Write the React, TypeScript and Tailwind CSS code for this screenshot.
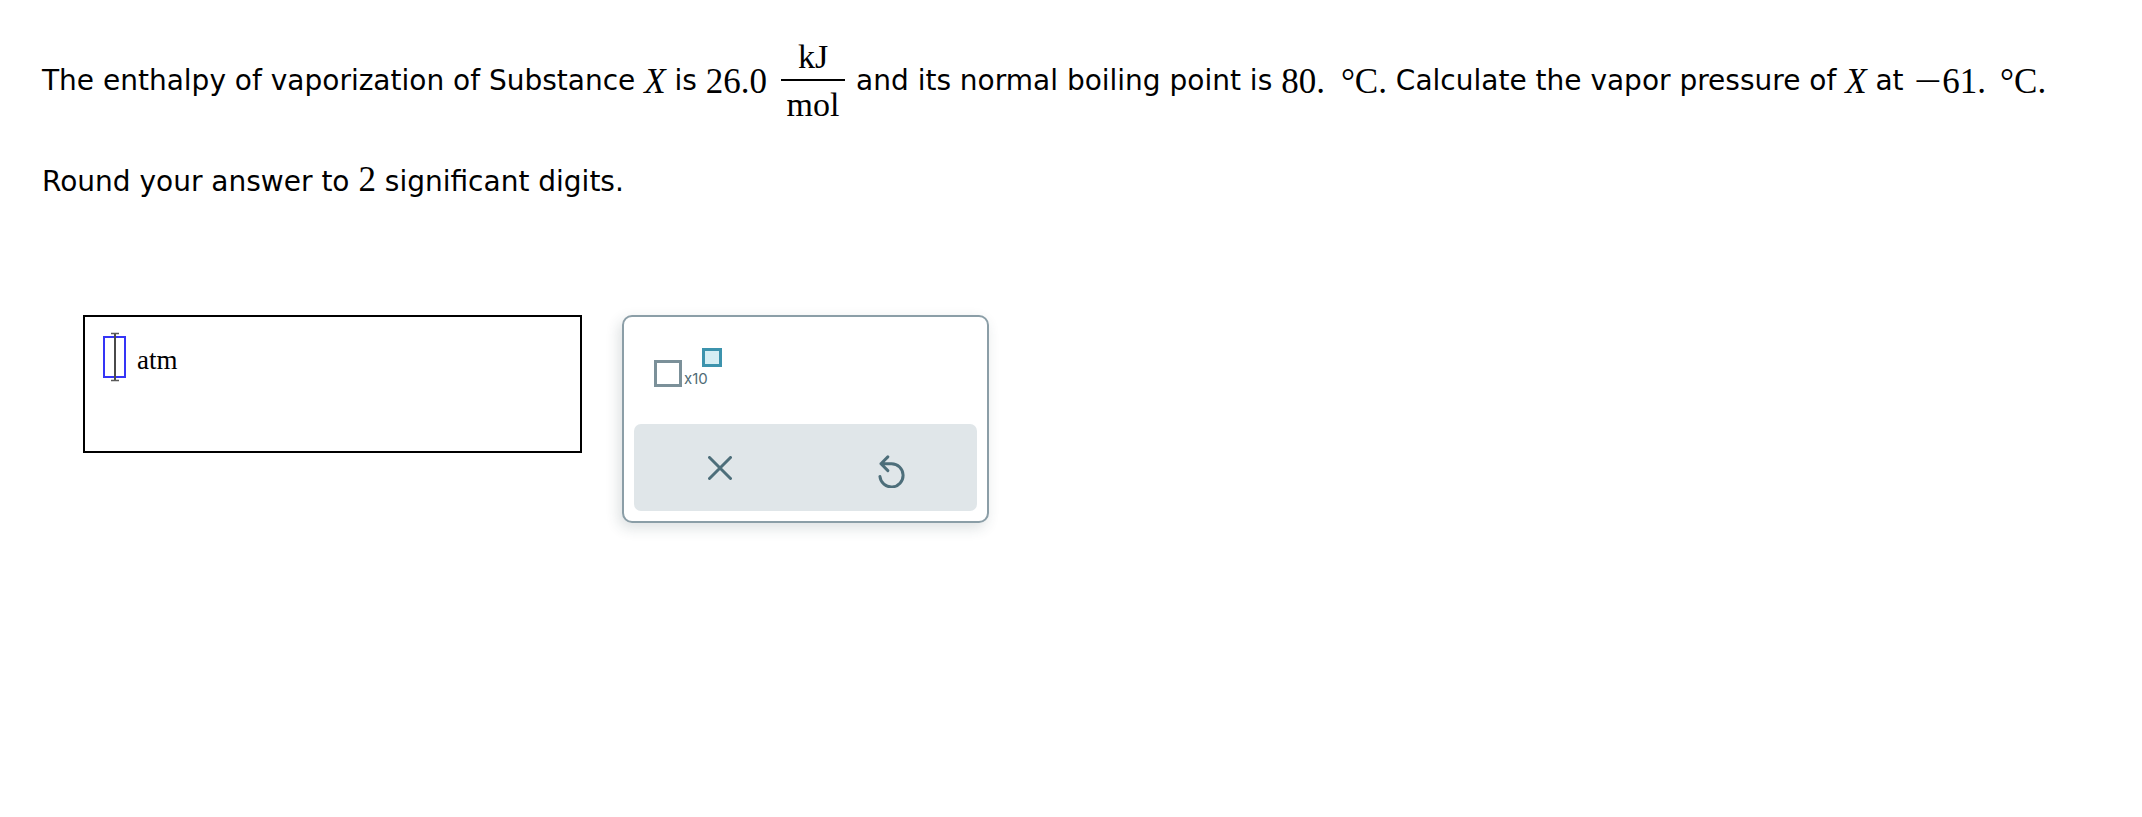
const SANS = { fontFamily: '"DejaVu Sans", Verdana, sans-serif' };
const SERIF = { fontFamily: '"Liberation Serif", "Times New Roman", serif' };

function MathText({ children, italic = false }: { children: React.ReactNode; italic?: boolean }) {
  return (
    <span className={`text-[35px] leading-none ${italic ? 'italic' : ''}`} style={SERIF}>
      {children}
    </span>
  );
}

function Fraction({ top, bottom }: { top: string; bottom: string }) {
  return (
    <span className="inline-flex flex-col items-center text-[34px] ml-[14px] mr-[11px]" style={SERIF}>
      <span className="leading-[30px] pb-[7px]">{top}</span>
      <span className="h-[2px] w-[64px] bg-black" />
      <span className="leading-[30px] pt-[9px]">{bottom}</span>
    </span>
  );
}

function CursorSlot() {
  return (
    <span className="relative inline-block w-[23px] h-[42px] border-2 border-[#3535f6]">
      <svg className="absolute left-[1.5px] top-[-6px]" width="16" height="50" viewBox="0 0 16 50">
        <path d="M8 2v46" stroke="#4a4a4a" strokeWidth="2" fill="none" />
        <path d="M4 1.5h8M4 48.5h8" stroke="#5a5a5a" strokeWidth="1.5" fill="none" />
      </svg>
    </span>
  );
}

function TimesIcon() {
  return (
    <svg width="24" height="24" viewBox="0 0 24 24" fill="none">
      <path d="M1.5 1.5l21 21M22.5 1.5l-21 21" stroke="#4d6e7a" strokeWidth="3" strokeLinecap="round" />
    </svg>
  );
}

function UndoIcon() {
  return (
    <svg width="30" height="38" viewBox="0 0 28 36" fill="none" className="mt-[2px]">
      <path
        d="M11 6.5 4.5 13l6.5 6.5M4.5 13H14.5a11 11 0 1 1-11 12"
        stroke="#4d6e7a"
        strokeWidth="2.8"
        strokeLinecap="round"
        strokeLinejoin="round"
      />
    </svg>
  );
}

function ScientificNotationIcon() {
  return (
    <div className="relative w-[70px] h-[42px]">
      <span className="absolute left-0 top-[12px] w-[28px] h-[27px] border-[3px] border-[#7b9099] bg-white" />
      <span
        className="absolute left-[30px] top-[23px] text-[15px] leading-none text-[#4f6b76]"
        style={{ fontFamily: 'Inter, "Open Sans", sans-serif' }}
      >
        x10
      </span>
      <span className="absolute left-[48px] top-0 w-[20px] h-[19px] border-[3px] border-[#3c93ad] bg-[#d5eef4]" />
    </div>
  );
}

export default function App() {
  return (
    <div className="w-[2142px] h-[817px] bg-white text-black" style={SANS}>
      <div className="flex items-center whitespace-pre pl-[42px] pt-[42px] text-[28px] leading-none">
        <span>The enthalpy of vaporization of Substance </span>
        <MathText italic>X</MathText>
        <span> is </span>
        <MathText>26.0</MathText>
        <Fraction top="kJ" bottom="mol" />
        <span>and its normal boiling point is </span>
        <MathText>80.</MathText>
        <MathText>
          <span className="ml-[16px]">°C.</span>
        </MathText>
        <span> Calculate the vapor pressure of </span>
        <MathText italic>X</MathText>
        <span> at</span>
        <MathText>
          <span className="inline-block scale-x-[1.4] ml-[14px] mr-[5px]">−</span>61.
        </MathText>
        <MathText>
          <span className="ml-[14px]">°C.</span>
        </MathText>
      </div>

      <p className="pl-[42px] mt-[42px] text-[28px] leading-none whitespace-pre">
        Round your answer to <MathText>2</MathText> significant digits.
      </p>

      <div className="flex items-start gap-[40px] ml-[83px] mt-[118px]">
        <div className="w-[499px] h-[138px] border-2 border-black pl-[18px] pt-[19px]">
          <div className="flex items-center gap-[11px]">
            <CursorSlot />
            <span className="text-[27px] leading-none mt-[6px]" style={SERIF}>
              atm
            </span>
          </div>
        </div>

        <div className="w-[367px] h-[208px] border-2 border-[#8b9ea7] rounded-[10px] bg-white shadow-[-3px_5px_14px_rgba(40,60,70,0.16)] flex flex-col">
          <div className="pl-[30px] pt-[31px] h-[107px]">
            <ScientificNotationIcon />
          </div>
          <div className="mx-[10px] h-[87px] rounded-[7px] bg-[#e0e6e9] grid grid-cols-2">
            <button className="flex items-center justify-center">
              <TimesIcon />
            </button>
            <button className="flex items-center justify-center">
              <UndoIcon />
            </button>
          </div>
        </div>
      </div>
    </div>
  );
}
